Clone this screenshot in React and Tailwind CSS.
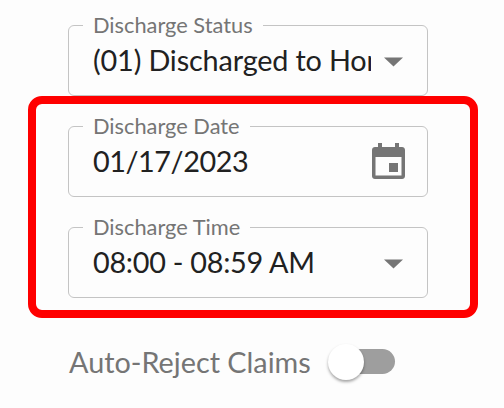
import React from 'react'

const Caret = () => (
  <svg width="19" height="10" viewBox="0 0 19 10" className="mt-[4px] shrink-0">
    <path d="M0 0.500h19L9.500 9.500z" fill="#757575" />
  </svg>
)

const CalendarIcon = () => (
  <svg width="33" height="36" viewBox="0 0 33 36" className="shrink-0">
    <path
      fillRule="evenodd"
      d="M6 0h4v4h13V0h4v4h3c1.700 0 3 1.300 3 3v26c0 1.700-1.300 3-3 3H3c-1.700 0-3-1.300-3-3V7c0-1.700 1.300-3 3-3h3zM3.500 14v18.500h26V14z"
      fill="#757575"
    />
    <rect x="17" y="20" width="9" height="9" fill="#757575" />
  </svg>
)

const Field = ({ label, value, children, valueClass }) => (
  <fieldset className="h-[81px] w-[360px] rounded-[6px] border border-[#c4c4c4] pl-[13px] pr-[24px] [font-family:Lato,sans-serif]">
    <legend className="ml-[1px] px-[10px] text-[21.8px] leading-[20px] text-[#757575] whitespace-nowrap">{label}</legend>
    <div className="flex h-[50px] items-center justify-between">
      <span className={`pl-[11px] text-[28.8px] leading-[36px] text-[#212121] whitespace-nowrap overflow-hidden ${valueClass}`}>
        {value}
      </span>
      {children}
    </div>
  </fieldset>
)

const App = () => {
  return (
    <div className="h-[408px] w-[504px] overflow-hidden bg-[#fdfdfd] pl-[28px] pt-[15px] [font-family:Lato,sans-serif]">
      <div className="ml-[40px]">
        <Field label="Discharge Status" value="(01) Discharged to Home" valueClass="w-[289px] tracking-[-0.15px]">
          <Caret />
        </Field>
      </div>
      <div className="flex h-[222px] w-[450px] flex-col gap-[20px] rounded-[14px] border-[8px] border-[#ff0000] pl-[32px] pt-[12px]">
        <Field label="Discharge Date" value="01/17/2023" valueClass="tracking-[-0.44px]">
          <div className="-mr-[2px] -mt-[1px]"><CalendarIcon /></div>
        </Field>
        <Field label="Discharge Time" value="08:00 - 08:59 AM" valueClass="tracking-[-0.27px]">
          <Caret />
        </Field>
      </div>
      <div className="ml-[41px] mt-[26px] flex items-start">
        <span className="text-[28.8px] leading-[36px] text-[#757575]">Auto-Reject Claims</span>
        <div className="relative ml-[34px] mt-[5px] h-[25px] w-[50px] rounded-full bg-[#9e9e9e]">
          <div className="absolute -left-[17px] -top-[5px] h-[36px] w-[36px] rounded-full bg-white shadow-[0_2px_3px_rgba(0,0,0,0.35)]" />
        </div>
      </div>
    </div>
  )
}

export default App
